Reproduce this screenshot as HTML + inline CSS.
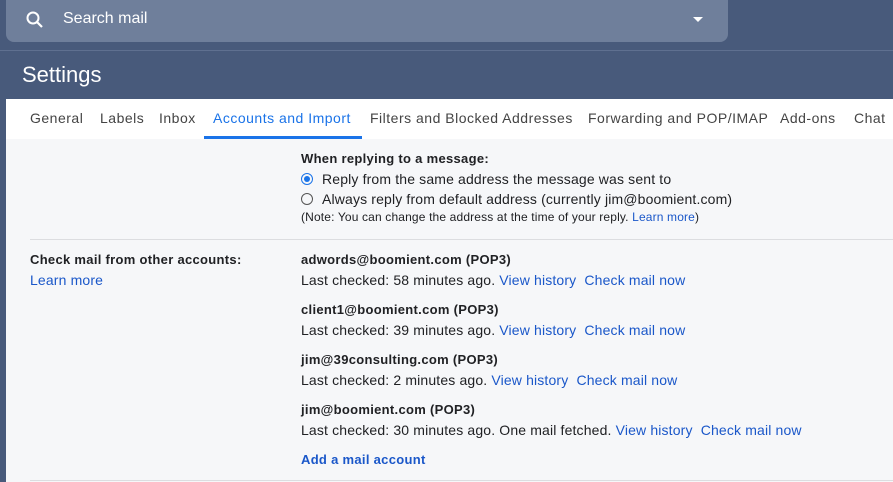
<html><head><style>
body{margin:0;width:893px;height:482px;overflow:hidden;background:#485a7b;font-family:"Liberation Sans",Arial,sans-serif;position:relative}
.a{position:absolute;white-space:nowrap}
.s{font-size:14px;color:#202124;letter-spacing:0.15px}
.b{font-weight:bold;letter-spacing:0.3px}
.l{color:#1a57c9}
</style></head><body>
<div class="a" style="left:6px;top:0;width:722px;height:42px;background:#6f7f9b;border-radius:0 0 8px 8px"></div>
<svg class="a" style="left:25px;top:10px" width="20" height="20" viewBox="0 0 20 20"><circle cx="8" cy="8" r="5.5" fill="none" stroke="#fff" stroke-width="2"/><path d="M12 12l5 5" stroke="#fff" stroke-width="2.2"/></svg>
<div class="a" style="left:63px;top:10px;font-size:16px;color:#fff">Search mail</div>
<div class="a" style="left:693px;top:17px;width:0;height:0;border-left:5px solid transparent;border-right:5px solid transparent;border-top:5px solid #fff"></div>
<div class="a" style="left:0;top:50px;width:893px;height:1px;background:#5f7090"></div>
<div class="a" style="left:22px;top:62px;font-size:22px;color:#fff">Settings</div>
<div class="a" style="left:6px;top:99px;width:887px;height:40px;background:#fff"></div>
<div class="a" style="left:6px;top:139px;width:887px;height:343px;background:#f6f7f9"></div>
<div class="a" style="top:110px;left:0;font-size:14px;color:#444;letter-spacing:0.5px">
<span class="a" style="left:30px">General</span><span class="a" style="left:100px">Labels</span><span class="a" style="left:159px">Inbox</span><span class="a" style="left:213px;color:#1a73e8">Accounts and Import</span><span class="a" style="left:370px">Filters and Blocked Addresses</span><span class="a" style="left:588px">Forwarding and POP/IMAP</span><span class="a" style="left:780px">Add-ons</span><span class="a" style="left:854px">Chat</span></div>
<div class="a" style="left:204px;top:136px;width:158px;height:3px;background:#1a73e8"></div>
<div class="a s b" style="left:301px;top:151px;font-size:13px">When replying to a message:</div>
<div class="a" style="left:301px;top:173px;width:10px;height:10px;border:1.5px solid #1a73e8;border-radius:50%"><div style="margin:2px;width:6px;height:6px;border-radius:50%;background:#1a73e8"></div></div>
<div class="a s" style="left:322px;top:171px">Reply from the same address the message was sent to</div>
<div class="a" style="left:301px;top:193px;width:10px;height:10px;border:1.5px solid #555;border-radius:50%"></div>
<div class="a s" style="left:322px;top:191px">Always reply from default address (currently jim@boomient.com)</div>
<div class="a s" style="left:301px;top:210px;font-size:12px">(Note: You can change the address at the time of your reply. <span class="l">Learn more</span>)</div>
<div class="a" style="left:30px;top:239px;width:863px;height:1px;background:#dcdde0"></div>
<div class="a s b" style="left:30px;top:252px;font-size:13px">Check mail from other accounts:</div>
<div class="a s l" style="left:30px;top:272px">Learn more</div>
<div class="a s b" style="left:301px;top:252px;font-size:13px">adwords@boomient.com (POP3)</div>
<div class="a s" style="left:301px;top:272px">Last checked: 58 minutes ago. <span class="l">View history</span> &nbsp;<span class="l">Check mail now</span></div>
<div class="a s b" style="left:301px;top:302px;font-size:13px">client1@boomient.com (POP3)</div>
<div class="a s" style="left:301px;top:322px">Last checked: 39 minutes ago. <span class="l">View history</span> &nbsp;<span class="l">Check mail now</span></div>
<div class="a s b" style="left:301px;top:352px;font-size:13px">jim@39consulting.com (POP3)</div>
<div class="a s" style="left:301px;top:372px">Last checked: 2 minutes ago. <span class="l">View history</span> &nbsp;<span class="l">Check mail now</span></div>
<div class="a s b" style="left:301px;top:402px;font-size:13px">jim@boomient.com (POP3)</div>
<div class="a s" style="left:301px;top:422px">Last checked: 30 minutes ago. One mail fetched. <span class="l">View history</span> &nbsp;<span class="l">Check mail now</span></div>
<div class="a s b l" style="left:301px;top:452px;font-size:13px">Add a mail account</div>
<div class="a" style="left:30px;top:480px;width:863px;height:1px;background:#dcdde0"></div>
</body></html>
